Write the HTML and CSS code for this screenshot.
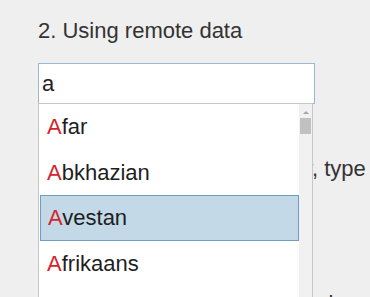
FILE: index.html
```html
<!DOCTYPE html>
<html lang="en">
<head>
<meta charset="utf-8">
<title>Using remote data</title>
<link rel="stylesheet" href="styles.css">
</head>
<body>
<div class="page">
  <h2 class="title">2. Using remote data</h2>
  <div class="field">
    <input class="search" type="text" value="a">
    <div class="menu">
      <ul class="items">
        <li class="item"><span class="hl">A</span>far</li>
        <li class="item"><span class="hl">A</span>bkhazian</li>
        <li class="item active"><span class="hl">A</span>vestan</li>
        <li class="item"><span class="hl">A</span>frikaans</li>
        <li class="item"><span class="hl">A</span>kan</li>
      </ul>
      <div class="scrollbar">
        <div class="arrow"></div>
        <div class="thumb"></div>
      </div>
    </div>
  </div>
  <p class="note">Enter a language name now, type more letters</p>
  <p class="note note-second">Results are fetched remotely, in a list</p>
</div>
</body>
</html>
```

FILE: styles.css
```css
html, body {
  margin: 0;
  padding: 0;
}
body {
  background: #efefef;
  font-family: "Liberation Sans", Arial, sans-serif;
  width: 370px;
  height: 297px;
  overflow: hidden;
}
.page {
  padding: 18px 0 0 38px;
}
.title {
  margin: 0;
  font-size: 22px;
  font-weight: normal;
  line-height: 25px;
  color: #333;
}
.field {
  position: relative;
  margin-top: 20px;
  width: 277px;
}
.search {
  display: block;
  box-sizing: border-box;
  width: 277px;
  height: 41px;
  margin: 0;
  padding: 0 3px;
  border: 1px solid #9ab8d6;
  background: #fff;
  font-family: "Liberation Sans", Arial, sans-serif;
  font-size: 22px;
  color: #222;
  outline: none;
}
.menu {
  position: absolute;
  top: 40px;
  left: 0;
  width: 275px;
  height: 230px;
  box-sizing: border-box;
  border: 1px solid #c6c6c6;
  background: #fff;
  display: flex;
  z-index: 2;
}
.items {
  list-style: none;
  margin: 0;
  padding: 0;
  width: 260px;
}
.item {
  box-sizing: border-box;
  height: 45.5px;
  width: 259px;
  margin-left: 1px;
  border: 1px solid transparent;
  padding-left: 6px;
  font-size: 22px;
  line-height: 44.5px;
  color: #1e1e1e;
  white-space: nowrap;
  overflow: hidden;
}
.item.active {
  background: #c3d9e7;
  border-color: #6f9cc0;
  padding-left: 7px;
}
.hl {
  color: #d3252d;
}
.scrollbar {
  width: 13px;
  background: #f1f1f1;
  display: flex;
  flex-direction: column;
  align-items: center;
}
.arrow {
  margin-top: 7px;
  width: 0;
  height: 0;
  border-left: 3px solid transparent;
  border-right: 3px solid transparent;
  border-bottom: 3px solid #a5a5a5;
}
.thumb {
  margin-top: 4px;
  width: 11px;
  height: 16px;
  background: #c1c1c1;
}
.note {
  margin: 52px 0 0 0;
  font-size: 22px;
  line-height: 25px;
  color: #333;
  white-space: nowrap;
}
.note-second {
  margin-top: 110px;
}
```
